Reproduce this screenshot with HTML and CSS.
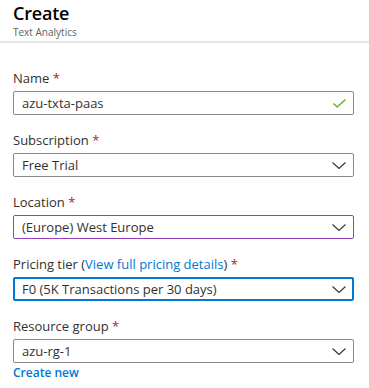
FILE: index.html
```html
<!DOCTYPE html>
<html lang="en">
<head>
    <meta charset="UTF-8">
    <title>Create - Text Analytics</title>
    <link rel="stylesheet" href="styles.css">
</head>
<body>
    <div class="blade-header">
        <h1>Create</h1>
        <div class="subtitle">Text Analytics</div>
    </div>

    <div class="form">
        <!-- Name -->
        <div class="field">
            <label>Name <span class="req">*</span></label>
            <div class="box">
                <span class="value">azu-txta-paas</span>
                <svg class="icon" width="13" height="9" viewBox="0 0 13 9"><path d="M0.5 4.5 L4.2 8 L12.5 0.5" fill="none" stroke="#57a300" stroke-width="1.1"/></svg>
            </div>
        </div>

        <!-- Subscription -->
        <div class="field">
            <label>Subscription <span class="req">*</span></label>
            <div class="box">
                <span class="value">Free Trial</span>
                <svg class="icon" width="14" height="7" viewBox="0 0 14 7"><path d="M0.5 0.5 L7 6.5 L13.5 0.5" fill="none" stroke="#323130" stroke-width="1.1"/></svg>
            </div>
        </div>

        <!-- Location -->
        <div class="field">
            <label>Location <span class="req">*</span></label>
            <div class="box hover">
                <span class="value">(Europe) West Europe</span>
                <svg class="icon" width="14" height="7" viewBox="0 0 14 7"><path d="M0.5 0.5 L7 6.5 L13.5 0.5" fill="none" stroke="#323130" stroke-width="1.1"/></svg>
            </div>
        </div>

        <!-- Pricing tier -->
        <div class="field">
            <label>Pricing tier (<a href="#">View full pricing details</a>) <span class="req">*</span></label>
            <div class="box focus">
                <span class="value">F0 (5K Transactions per 30 days)</span>
                <svg class="icon" width="14" height="7" viewBox="0 0 14 7"><path d="M0.5 0.5 L7 6.5 L13.5 0.5" fill="none" stroke="#323130" stroke-width="1.1"/></svg>
            </div>
        </div>

        <!-- Resource group -->
        <div class="field">
            <label>Resource group <span class="req">*</span></label>
            <div class="box">
                <span class="value">azu-rg-1</span>
                <svg class="icon" width="14" height="7" viewBox="0 0 14 7"><path d="M0.5 0.5 L7 6.5 L13.5 0.5" fill="none" stroke="#323130" stroke-width="1.1"/></svg>
            </div>
            <a href="#" class="create-new">Create new</a>
        </div>
    </div>
</body>
</html>
```

FILE: styles.css
```css
* { margin: 0; padding: 0; box-sizing: border-box; }

body {
    font-family: "Open Sans", "Noto Sans", sans-serif;
    background: white;
    color: #323130;
    width: 369px;
    overflow: hidden;
}

.blade-header {
    padding: 0 13px;
    height: 43px;
    border-bottom: 2px solid #e5e5e5;
}

h1 {
    font-size: 18px;
    font-weight: 600;
    line-height: 25px;
    letter-spacing: -0.2px;
    color: #000;
    padding-top: 1px;
}

.subtitle {
    font-size: 10px;
    line-height: 13px;
    color: #605e5c;
}

.form {
    padding: 25px 15px 0 13px;
}

.field {
    margin-bottom: 15px;
}

label {
    display: block;
    font-size: 13px;
    line-height: 20px;
    margin-bottom: 3px;
}

.req { color: #a4262c; }

a {
    color: #0078d4;
    text-decoration: none;
}

.box {
    height: 24px;
    border: 1px solid #8a8886;
    border-radius: 2px;
    display: flex;
    align-items: center;
    justify-content: space-between;
    padding: 0 7px 0 8px;
    font-size: 13px;
}

.box.hover { border-color: #9a3dbd; }

.box.focus {
    border: 2px solid #0078d4;
    padding: 0 6px 0 7px;
}

.icon { display: block; }

.create-new {
    display: block;
    font-size: 12px;
    font-weight: 600;
    line-height: 18px;
    margin-top: 1px;
}
```
